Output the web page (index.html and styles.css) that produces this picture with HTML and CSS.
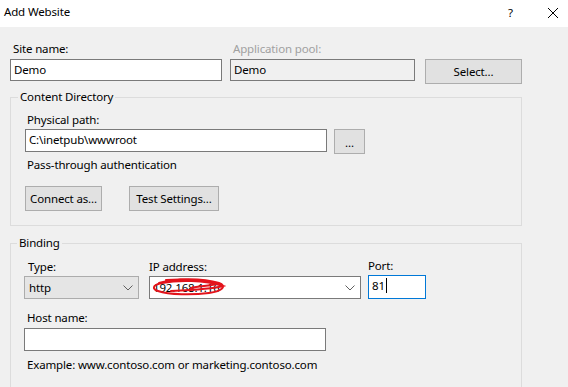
FILE: index.html
```html
<!DOCTYPE html>
<html>
<head>
<meta charset="utf-8">
<link rel="stylesheet" href="styles.css">
</head>
<body>
<div class="window">
  <div class="titlebar">
    <span class="title">Add Website</span>
    <span class="help">?</span>
    <svg class="close" width="12" height="12" viewBox="0 0 12 12"><path d="M1 1 L11 11 M11 1 L1 11" stroke="#000" stroke-width="1" fill="none"/></svg>
  </div>
  <div class="main">
    <div class="toprow">
      <div class="field site">
        <label class="lbl">Site name:</label>
        <div class="input">Demo</div>
      </div>
      <div class="field pool">
        <label class="lbl disabled">Application pool:</label>
        <div class="input readonly">Demo</div>
      </div>
      <div class="field selectcol">
        <div class="btn select-btn">Select...</div>
      </div>
    </div>

    <fieldset class="group content-dir">
      <legend>Content Directory</legend>
      <label class="lbl">Physical path:</label>
      <div class="pathrow">
        <div class="input path">C:\inetpub\wwwroot</div>
        <div class="btn dots">...</div>
      </div>
      <div class="note">Pass-through authentication</div>
      <div class="btnrow">
        <div class="btn connect">Connect as...</div>
        <div class="btn test">Test Settings...</div>
      </div>
    </fieldset>

    <fieldset class="group binding">
      <legend>Binding</legend>
      <div class="bindrow">
        <div class="field type">
          <label class="lbl">Type:</label>
          <div class="combo gray">
            <span>http</span>
            <svg class="chev" width="10" height="6" viewBox="0 0 10 6"><path d="M0.5 0.5 L5 5 L9.5 0.5" stroke="#606060" fill="none"/></svg>
          </div>
        </div>
        <div class="field ip">
          <label class="lbl">IP address:</label>
          <div class="combo white">
            <span class="iptext">192.168.1.16</span>
            <svg class="scribble" width="76" height="22" viewBox="0 0 76 22"><path d="M8 6 C 24 1, 52 1, 68 6 C 76 9, 72 14, 58 16 C 42 18, 18 18, 7 14 C 1 12, 1 8, 11 6 C 27 3, 53 3, 72 9 C 62 12, 42 13, 20 14 M15 3 C 31 2, 51 3, 66 7 C 57 9, 47 9, 40 11" stroke="#e3131b" stroke-width="2" fill="none" stroke-linecap="round"/></svg>
            <svg class="chev" width="10" height="6" viewBox="0 0 10 6"><path d="M0.5 0.5 L5 5 L9.5 0.5" stroke="#606060" fill="none"/></svg>
          </div>
        </div>
        <div class="field port">
          <label class="lbl">Port:</label>
          <div class="input focused">81<span class="caret"></span></div>
        </div>
      </div>
      <label class="lbl host-lbl">Host name:</label>
      <div class="input host"></div>
      <div class="note example">Example: www.contoso.com or marketing.contoso.com</div>
    </fieldset>
  </div>
</div>
</body>
</html>
```

FILE: styles.css
```css
* { box-sizing: border-box; }
html, body {
  margin: 0;
  padding: 0;
  background: #f0f0f0;
  overflow: hidden;
}
body {
  font-family: "Noto Sans", "Open Sans", sans-serif;
  font-size: 11.5px;
  letter-spacing: -0.15px;
  line-height: 16px;
  color: #000;
  width: 568px;
  height: 387px;
}
.window {
  width: 568px;
  height: 387px;
  overflow: hidden;
}
.titlebar {
  height: 27px;
  background: #fff;
  display: flex;
  align-items: center;
  padding-left: 4px;
}
.title {
  flex: 1;
  margin-top: -3px;
}
.help {
  width: 12px;
  margin-right: 27px;
  margin-top: -2px;
}
.close {
  margin-right: 9px;
  margin-top: -2px;
}
.main {
  padding: 14px 46px 0 10px;
}
.toprow {
  display: flex;
  align-items: flex-end;
  margin-bottom: 8px;
}
.field {
  display: flex;
  flex-direction: column;
}
.lbl {
  display: block;
  padding-left: 3px;
  height: 16px;
  margin-bottom: 2px;
}
.lbl.disabled { color: #a0a0a0; }
.input {
  height: 22px;
  border: 1px solid #7a7a7a;
  background: #fff;
  padding: 2px 3px;
  line-height: 16px;
  white-space: nowrap;
  overflow: hidden;
}
.input.readonly { background: #f0f0f0; }
.site { width: 212px; }
.pool { width: 185px; margin-left: 8px; }
.selectcol { width: 97px; margin-left: 10px; }
.btn {
  height: 25px;
  border: 1px solid #adadad;
  background: #e1e1e1;
  display: flex;
  align-items: center;
  justify-content: center;
  white-space: nowrap;
}
.select-btn { margin-bottom: -3px; }

.group {
  margin: 0;
  border: 1px solid #dcdcdc;
  min-width: 0;
}
.group legend {
  padding: 0 2px;
  margin-left: -7px;
  line-height: 16px;
}
.content-dir {
  padding: 7px 14px 14px 14px;
}
.content-dir .lbl { margin-bottom: 1px; padding-left: 2px; }
.pathrow {
  display: flex;
  align-items: flex-start;
}
.path { width: 302px; height: 23px; }
.dots {
  width: 31px;
  margin-left: 7px;
  padding-bottom: 2px;
  align-items: flex-end;
}
.note {
  margin-top: 3px;
  padding-left: 2px;
  height: 16px;
}
.btnrow {
  display: flex;
  margin-top: 13px;
}
.connect { width: 77px; }
.test { width: 90px; margin-left: 27px; }

.binding {
  margin-top: 9px;
  padding: 7px 13px 0 13px;
  height: 300px;
}
.bindrow {
  display: flex;
  align-items: flex-end;
}
.bindrow .lbl { padding-left: 4px; margin-bottom: 1px; }
.type { width: 115px; }
.ip { width: 212px; margin-left: 10px; }
.ip .lbl { padding-left: 0; }
.port { width: 58px; margin-left: 7px; }
.port .lbl { padding-left: 0; }
.combo {
  position: relative;
  height: 23px;
  display: flex;
  align-items: center;
  padding: 0 0 0 3px;
}
.combo span { flex: 1; }
.combo.gray { background: #e5e5e5; border: 1px solid #acacac; }
.combo.white { background: #fff; border: 1px solid #7a7a7a; }
.combo .chev { margin-right: 5px; }
.combo.gray span { padding-left: 1px; }
.scribble {
  position: absolute;
  left: 1px;
  top: 0;
}
.input.focused {
  height: 24px;
  border-color: #0078d7;
}
.caret {
  display: inline-block;
  width: 1px;
  height: 15px;
  background: #000;
  vertical-align: -3px;
  margin-left: 1px;
}
.host-lbl { margin-top: 11px; margin-bottom: 2px; padding-left: 3px; }
.host { width: 302px; height: 23px; }
.example { margin-top: 6px; padding-left: 3px; }
```
